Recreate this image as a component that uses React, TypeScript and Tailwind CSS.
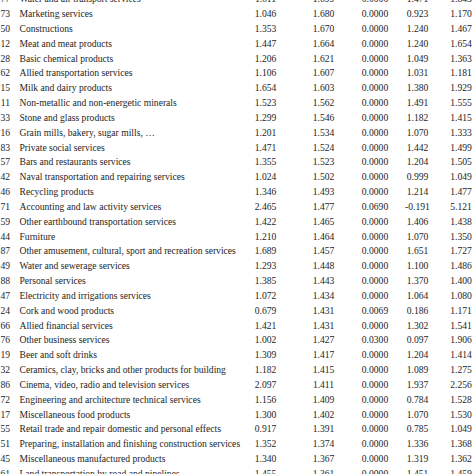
const rows: [string, string, string, string, string, string, string][] = [
  ["77", "Water and air transport services", "1.611", "1.699", "0.0000", "1.471", "1.843"],
  ["73", "Marketing services", "1.046", "1.680", "0.0000", "0.923", "1.170"],
  ["50", "Constructions", "1.353", "1.670", "0.0000", "1.240", "1.467"],
  ["12", "Meat and meat products", "1.447", "1.664", "0.0000", "1.240", "1.654"],
  ["28", "Basic chemical products", "1.206", "1.621", "0.0000", "1.049", "1.363"],
  ["62", "Allied transportation services", "1.106", "1.607", "0.0000", "1.031", "1.181"],
  ["15", "Milk and dairy products", "1.654", "1.603", "0.0000", "1.380", "1.929"],
  ["11", "Non-metallic and non-energetic minerals", "1.523", "1.562", "0.0000", "1.491", "1.555"],
  ["33", "Stone and glass products", "1.299", "1.546", "0.0000", "1.182", "1.415"],
  ["16", "Grain mills, bakery, sugar mills, …", "1.201", "1.534", "0.0000", "1.070", "1.333"],
  ["83", "Private social services", "1.471", "1.524", "0.0000", "1.442", "1.499"],
  ["57", "Bars and restaurants services", "1.355", "1.523", "0.0000", "1.204", "1.505"],
  ["42", "Naval transportation and repairing services", "1.024", "1.502", "0.0000", "0.999", "1.049"],
  ["46", "Recycling products", "1.346", "1.493", "0.0000", "1.214", "1.477"],
  ["71", "Accounting and law activity services", "2.465", "1.477", "0.0690", "-0.191", "5.121"],
  ["59", "Other earthbound transportation services", "1.422", "1.465", "0.0000", "1.406", "1.438"],
  ["44", "Furniture", "1.210", "1.464", "0.0000", "1.070", "1.350"],
  ["87", "Other amusement, cultural, sport and recreation services", "1.689", "1.457", "0.0000", "1.651", "1.727"],
  ["49", "Water and sewerage services", "1.293", "1.448", "0.0000", "1.100", "1.486"],
  ["88", "Personal services", "1.385", "1.443", "0.0000", "1.370", "1.400"],
  ["47", "Electricity and irrigations services", "1.072", "1.434", "0.0000", "1.064", "1.080"],
  ["24", "Cork and wood products", "0.679", "1.431", "0.0069", "0.186", "1.171"],
  ["66", "Allied financial services", "1.421", "1.431", "0.0000", "1.302", "1.541"],
  ["76", "Other business services", "1.002", "1.427", "0.0300", "0.097", "1.906"],
  ["19", "Beer and soft drinks", "1.309", "1.417", "0.0000", "1.204", "1.414"],
  ["32", "Ceramics, clay, bricks and other products for building", "1.182", "1.415", "0.0000", "1.089", "1.275"],
  ["86", "Cinema, video, radio and television services", "2.097", "1.411", "0.0000", "1.937", "2.256"],
  ["72", "Engineering and architecture technical services", "1.156", "1.409", "0.0000", "0.784", "1.528"],
  ["17", "Miscellaneous food products", "1.300", "1.402", "0.0000", "1.070", "1.530"],
  ["55", "Retail trade and repair domestic and personal effects", "0.917", "1.391", "0.0000", "0.785", "1.049"],
  ["51", "Preparing, installation and finishing construction services", "1.352", "1.374", "0.0000", "1.336", "1.368"],
  ["45", "Miscellaneous manufactured products", "1.340", "1.367", "0.0000", "1.319", "1.362"],
  ["61", "Land transportation by road and pipelines", "1.455", "1.361", "0.0000", "1.451", "1.459"],
];

export default function App() {
  return (
    <div className="w-[474px] h-[474px] overflow-hidden bg-white text-[#1e1e1e] text-[9.6px] leading-none font-['Liberation_Serif',serif]">
      <div className="-mt-[8.3px] flex flex-col">
        {rows.map((r) => (
          <div
            key={r[0] + r[1]}
            className="grid grid-cols-[10px_234px_43px_73px_30px_55px_32px] h-[14.83px] items-center whitespace-nowrap"
          >
            <span className="text-right">{r[0]}</span>
            <span className="pl-[9.5px]">{r[1]}</span>
            <span className="text-center">{r[2]}</span>
            <span className="text-center">{r[3]}</span>
            <span className="text-center">{r[4]}</span>
            <span className="text-center">{r[5]}</span>
            <span className="text-center">{r[6]}</span>
          </div>
        ))}
      </div>
    </div>
  );
}
